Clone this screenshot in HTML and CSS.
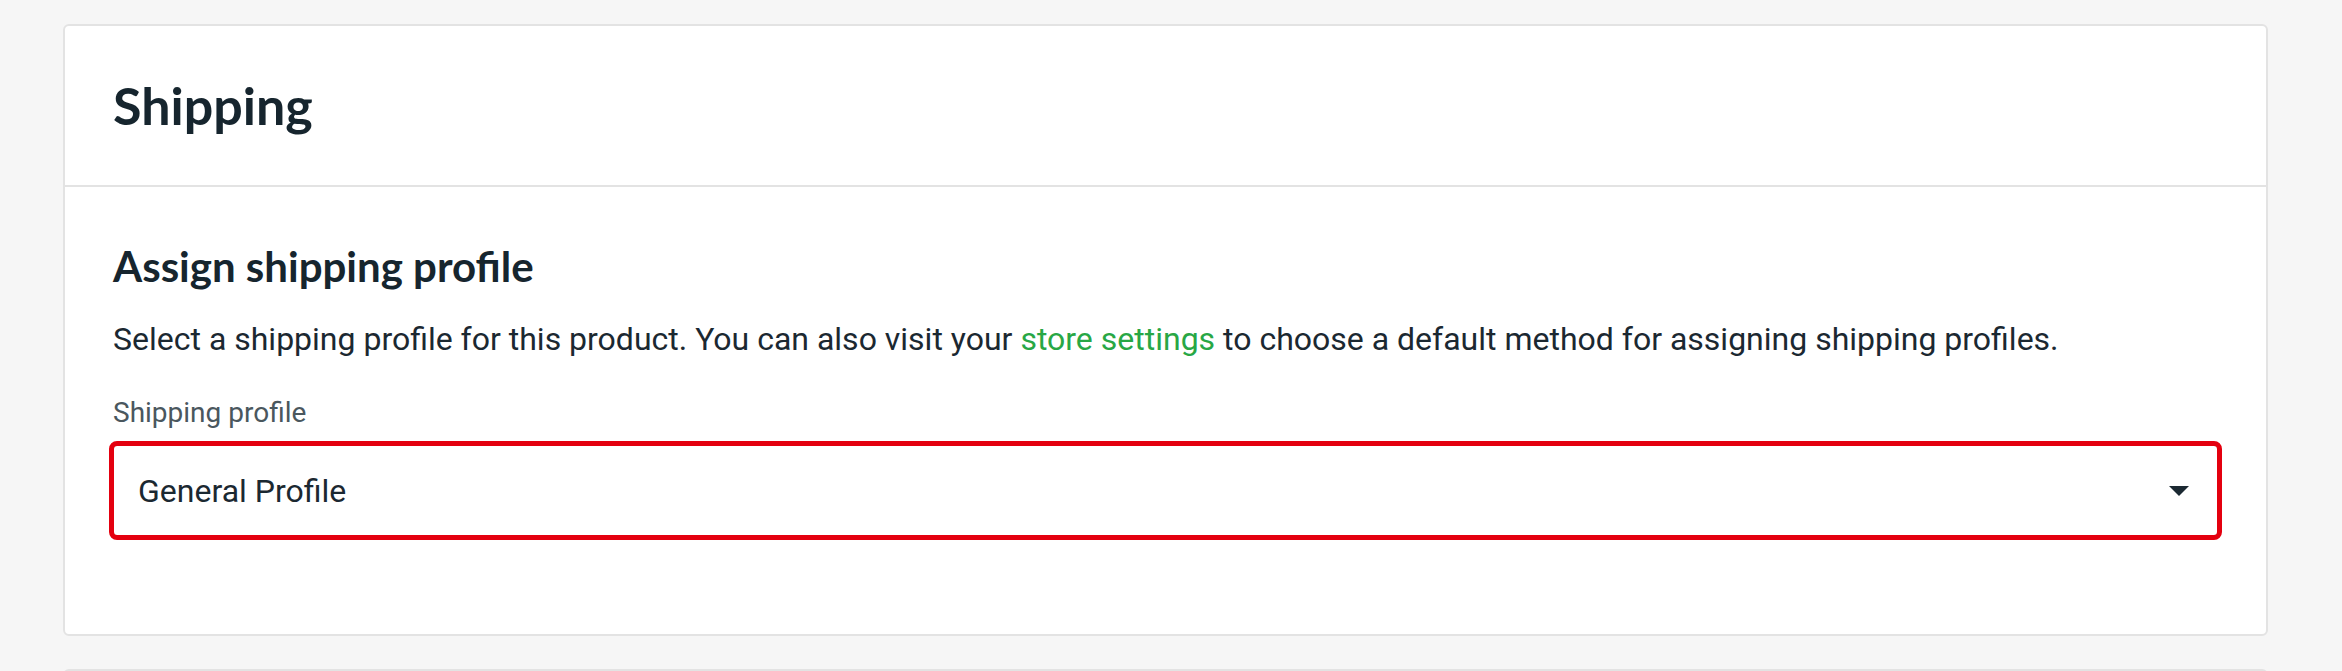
FILE: index.html
```html
<!DOCTYPE html>
<html><head><meta http-equiv="Content-Type" content="text/html; charset=UTF-8">
    <meta name="viewport" content="width=device-width, initial-scale=1.0">
    <title>Shipping</title>
    <link rel="stylesheet" href="styles.css">
</head>
<body>
    <section class="card">
        <header class="card-head">
            <h2>Shipping</h2>
        </header>
        <div class="card-body">
            <h3>Assign shipping profile</h3>
            <p class="desc">Select a shipping profile for this product. You can also visit your <a href="#">store settings</a> to choose a default method for assigning shipping profiles.</p>

            <label class="field-label" for="profile">Shipping profile</label>
            <div class="select" id="profile">
                <span>General Profile</span>
                <svg class="caret" width="20" height="10" viewBox="0 0 20 10"><path d="M0 0h20L10 10z" fill="#1b2932"/></svg>
            </div>
        </div>
    </section>

    <section class="card next"></section>
</body></html>
```

FILE: styles.css
```css
* {
    margin: 0;
    padding: 0;
    box-sizing: border-box;
}

body {
    background-color: #f6f6f6;
    font-family: 'Roboto', sans-serif;
    color: #1b2831;
    padding: 24px 74px 0 63px;
}

/* 卡片 */
.card {
    background: #fff;
    border: 2px solid #e3e3e3;
    border-radius: 6px;
}

.card.next {
    margin-top: 33px;
    height: 80px;
}

.card-head {
    height: 161px;
    border-bottom: 2px solid #e3e3e3;
    display: flex;
    align-items: center;
    padding: 0 48px;
}

.card-head h2 {
    font-family: 'Lato', sans-serif;
    font-weight: 700;
    font-size: 52px;
    line-height: 1.2;
    color: #16252e;
}

.card-body {
    padding: 54px 48px 98px;
}

.card-body h3 {
    font-family: 'Lato', sans-serif;
    font-weight: 700;
    font-size: 42px;
    line-height: 50px;
    color: #16252e;
}

.desc {
    margin-top: 24px;
    font-size: 32px;
    line-height: 48px;
}

.desc a {
    color: #28a745;
    text-decoration: none;
}

.field-label {
    display: block;
    margin-top: 32px;
    font-size: 28px;
    line-height: 36px;
    color: #4a575e;
}

/* 下拉框 + 红色标注框 */
.select {
    margin-top: 14px;
    height: 91px;
    display: flex;
    align-items: center;
    justify-content: space-between;
    padding: 0 28px 0 24px;
    border: 1px solid #d6d6d6;
    border-radius: 4px;
    outline: 5px solid #e4000f;
    outline-offset: -1px;
    font-size: 32px;
    color: #1b2831;
}

.caret {
    display: block;
}
```
